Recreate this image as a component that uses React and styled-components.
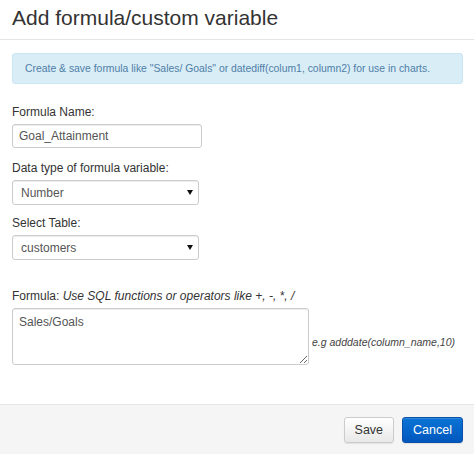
import React from "react";
import styled, { createGlobalStyle } from "styled-components";

const GlobalStyle = createGlobalStyle`
  html, body { margin: 0; padding: 0; background: #fff; }
  body {
    font-family: "Liberation Sans", Arial, sans-serif;
    color: #333;
  }
  * { box-sizing: border-box; }
`;

const Modal = styled.div`
  width: 474px;
  height: 454px;
  display: flex;
  flex-direction: column;
  background: #fff;
`;

const Header = styled.div`
  padding: 6px 12px 10px;
  border-bottom: 1px solid #e5e5e5;
`;

const Title = styled.h4`
  margin: 0;
  font-size: 21px;
  line-height: 23px;
  font-weight: normal;
  color: #333;
`;

const Body = styled.div`
  flex: 1;
  padding: 13px 11px 0 12px;
`;

const Alert = styled.div`
  padding: 8px 12px 8px;
  background: #d9edf7;
  border: 1px solid #c9e6f2;
  border-radius: 3px;
  color: #4f7ea6;
  font-size: 10.4px;
  line-height: 13px;
  white-space: nowrap;
  margin-bottom: 20px;
`;

const Group = styled.div`
  margin-bottom: ${(p) => p.$mb ?? 11}px;
`;

const Label = styled.label`
  display: block;
  font-size: 12px;
  line-height: 17px;
  margin-bottom: 3px;
  color: #333;
`;

const Em = styled.em`
  font-style: italic;
`;

const fieldBase = `
  font-family: "Liberation Sans", Arial, sans-serif;
  font-size: 12px;
  color: #555;
  background: #fff;
  border: 1px solid #ccc;
  border-radius: 3px;
  box-shadow: inset 0 1px 1px rgba(0,0,0,.075);
  outline: none;
`;

const TextInput = styled.input`
  ${fieldBase}
  display: block;
  width: 190px;
  height: 24px;
  padding: 0 6px;
`;

const SelectWrap = styled.div`
  position: relative;
  width: 187px;
  height: 25px;
`;

const Select = styled.select`
  ${fieldBase}
  display: block;
  width: 100%;
  height: 100%;
  padding: 0 6px 0 8px;
  appearance: none;
  -webkit-appearance: none;
`;

const Arrow = styled.svg`
  position: absolute;
  right: 6px;
  top: 10px;
  pointer-events: none;
`;

const FormulaRow = styled.div`
  display: flex;
  align-items: flex-end;
`;

const TextArea = styled.textarea`
  ${fieldBase}
  display: block;
  width: 297px;
  height: 57px;
  padding: 5px 6px;
  line-height: 16px;
`;

const Hint = styled.span`
  font-size: 10.5px;
  font-style: italic;
  color: #444;
  margin-left: 3px;
  padding-bottom: 16px;
  line-height: 13px;
`;

const Footer = styled.div`
  border-top: 1px solid #e5e5e5;
  background: #f5f5f5;
  padding: 12px 11px 11px;
  display: flex;
  justify-content: flex-end;
  gap: 8px;
`;

const Button = styled.button`
  font-family: "Liberation Sans", Arial, sans-serif;
  font-size: 12.5px;
  height: 26px;
  padding: 0 10px;
  border-radius: 3px;
  cursor: pointer;
  color: ${(p) => (p.$primary ? "#fff" : "#333")};
  border: 1px solid ${(p) => (p.$primary ? "#0a4fa8" : "#ccc")};
  background: ${(p) =>
    p.$primary
      ? "linear-gradient(to bottom, #0b74d6 0%, #0057bd 100%)"
      : "linear-gradient(to bottom, #ffffff 0%, #e8e8e8 100%)"};
  box-shadow: inset 0 1px 0 rgba(255,255,255,.15), 0 1px 1px rgba(0,0,0,.08);
`;

function Dropdown({ value }) {
  return (
    <SelectWrap>
      <Select defaultValue={value}>
        <option value={value}>{value}</option>
      </Select>
      <Arrow width="6" height="5" viewBox="0 0 6 5">
        <path d="M0 0 H6 L3 5 Z" fill="#111" />
      </Arrow>
    </SelectWrap>
  );
}

export default function App() {
  return (
    <>
      <GlobalStyle />
      <Modal>
        <Header>
          <Title>Add formula/custom variable</Title>
        </Header>
        <Body>
          <Alert>
            Create &amp; save formula like "Sales/ Goals" or datediff(colum1, column2) for use in charts.
          </Alert>
          <Group $mb={12}>
            <Label>Formula Name:</Label>
            <TextInput defaultValue="Goal_Attainment" />
          </Group>
          <Group $mb={10}>
            <Label>Data type of formula variable:</Label>
            <Dropdown value="Number" />
          </Group>
          <Group $mb={28}>
            <Label>Select Table:</Label>
            <Dropdown value="customers" />
          </Group>
          <Group $mb={0}>
            <Label>
              Formula: <Em>Use SQL functions or operators like +, -, *, /</Em>
            </Label>
            <FormulaRow>
              <TextArea defaultValue="Sales/Goals" />
              <Hint>e.g adddate(column_name,10)</Hint>
            </FormulaRow>
          </Group>
        </Body>
        <Footer>
          <Button>Save</Button>
          <Button $primary>Cancel</Button>
        </Footer>
      </Modal>
    </>
  );
}
